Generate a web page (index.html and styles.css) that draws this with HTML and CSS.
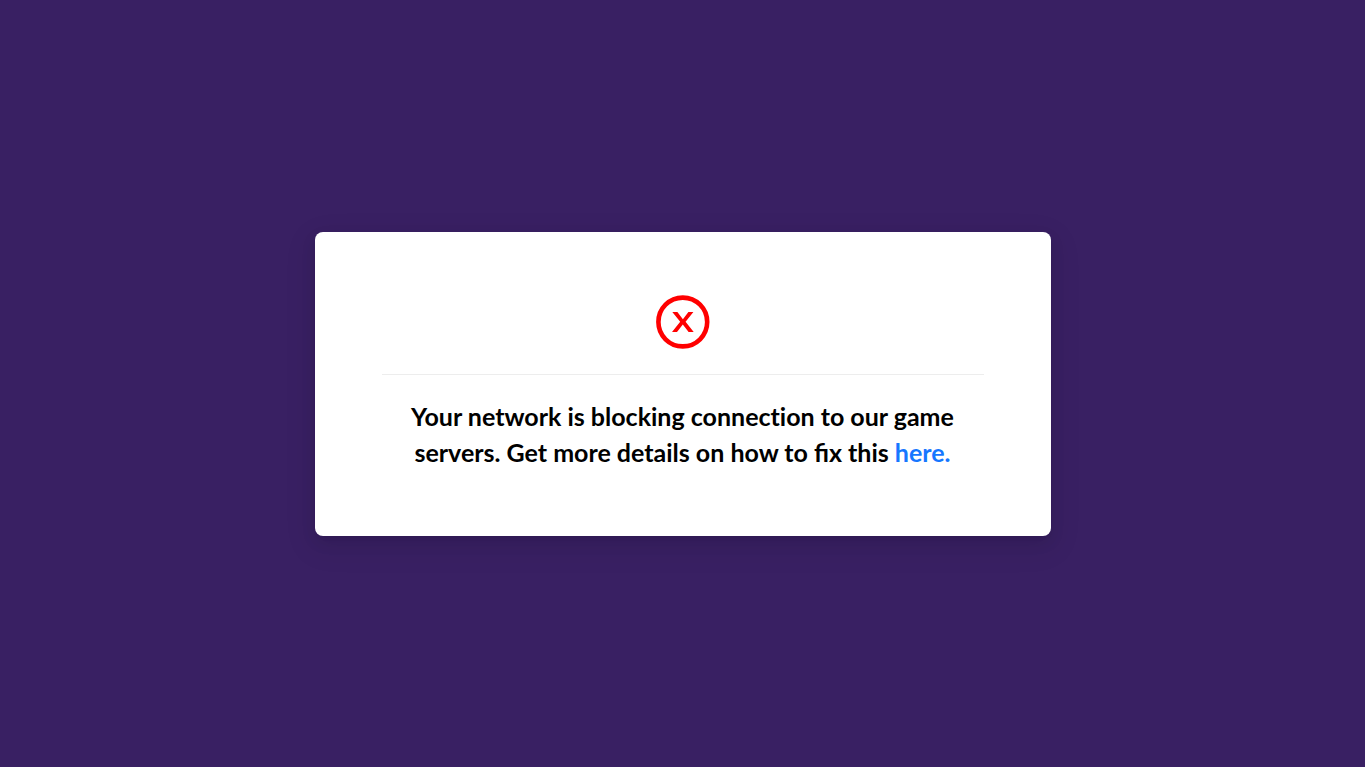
FILE: index.html
```html
<!DOCTYPE html>
<html lang="en">
<head>
<meta charset="utf-8">
<meta name="viewport" content="width=device-width, initial-scale=1">
<title>Connection blocked</title>
<link rel="stylesheet" href="styles.css">
</head>
<body>
<main class="page">
  <section class="card" role="alert">
    <svg class="icon" viewBox="0 0 54 54" aria-hidden="true">
      <circle cx="26.8" cy="27" r="24.4" fill="none" stroke="#f00" stroke-width="4.6"/>
      <path fill="#f00" d="M16.3 17h5.1l5.5 7.3 5.5-7.3h5l-7.8 9.7 8.1 10.3h-5.1l-5.8-7.6-5.8 7.6h-5l8.2-10.3z"/>
    </svg>
    <hr class="divider">
    <p class="message">Your network is blocking <span class="plain">connection</span> to our game servers. Get more details on how to fix this <a class="link" href="#">here.</a></p>
  </section>
</main>
</body>
</html>
```
FILE: styles.css
```css
body {
  margin: 0;
  background: #392063;
}

.page {
  box-sizing: border-box;
  min-height: 100vh;
  padding: 16px;
  display: flex;
  align-items: center;
  justify-content: center;
}

.card {
  box-sizing: border-box;
  width: 100%;
  max-width: 736px;
  padding: 63px 67px 66px;
  display: flex;
  flex-direction: column;
  align-items: center;
  background: #fff;
  border-radius: 8px;
  box-shadow: 0 6px 16px rgba(0, 0, 0, 0.08), 0 3px 6px -4px rgba(0, 0, 0, 0.12), 0 9px 28px 8px rgba(0, 0, 0, 0.05);
}

.icon {
  width: 54px;
  height: 54px;
}

.divider {
  width: 100%;
  height: 1px;
  margin: 25px 0 23px;
  border: 0;
  background: #ededed;
}

.message {
  margin: 0;
  padding: 0 24px;
  color: #000;
  font: 700 25px/36px Lato, "Open Sans", sans-serif;
  text-align: center;
}

.plain {
  font-variant-ligatures: none;
}

.link {
  color: #1677ff;
  text-decoration: none;
}
```
